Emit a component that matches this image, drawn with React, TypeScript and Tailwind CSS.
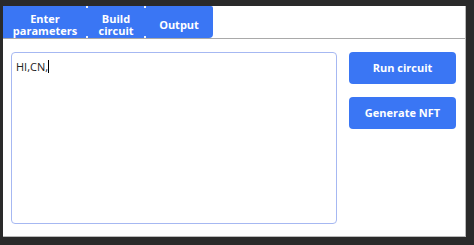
export default function App() {
  const font = { fontFamily: '"Open Sans", "Noto Sans", sans-serif' };

  // tab labels as they sit in the bar
  const tabs = [
    { label: ["Enter", "parameters"], width: "w-[84px]" },
    { label: ["Build", "circuit"], width: "w-[58px]" },
    { label: ["Output"], width: "w-[68px]" },
  ];

  return (
    <div className="w-[474px] h-[245px] bg-[#2a2a2a] pt-[6px] pl-[3px] pr-[8px] pb-[8px]" style={font}>
      <div className="flex flex-col w-full h-full bg-white border-r border-b border-[#b9b9b9]">
        {/* tab bar */}
        <div className="flex h-[33px] border-b border-[#a9a9a9] shrink-0">
          <div className="flex h-[32px] bg-[#3a76f4] rounded-br-[4px] rounded-tr-[2px]">
            {tabs.map((t, i) => (
              <div key={i} className={`relative flex flex-col items-center justify-center pt-[5px] ${t.width} text-white font-bold text-[11px] leading-[12px]`}>
                {t.label.map((l) => (
                  <span key={l}>{l}</span>
                ))}
                {i > 0 && (
                  <>
                    <span className="absolute left-[-1px] top-0 w-[2px] h-[2px] bg-white/90" />
                    <span className="absolute left-[-1px] bottom-0 w-[2px] h-[2px] bg-white/90" />
                  </>
                )}
              </div>
            ))}
          </div>
        </div>

        {/* body */}
        <div className="flex flex-1 pt-[13px] pl-[8px] gap-[12px]">
          <div className="w-[326px] h-[172px] border border-[#a6b8f2] rounded-[4px] px-[4px] pt-[7px] text-[11px] text-[#222] leading-[14px] shrink-0">
            HI,CN,<span className="inline-block w-[1px] h-[13px] bg-black align-[-2px]" />
          </div>
          <div className="flex flex-col gap-[13px]">
            <button className="w-[107px] h-[32px] rounded-[4px] bg-[#3a76f4] text-white font-bold text-[11px]">
              Run circuit
            </button>
            <button className="w-[107px] h-[32px] rounded-[4px] bg-[#3a76f4] text-white font-bold text-[11px]">
              Generate NFT
            </button>
          </div>
        </div>
      </div>
    </div>
  );
}
